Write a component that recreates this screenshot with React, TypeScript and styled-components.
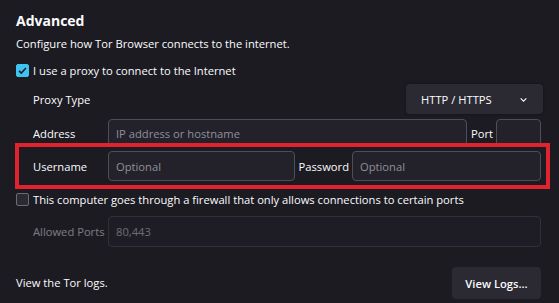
import React from "react";
import styled, { createGlobalStyle } from "styled-components";

const GlobalStyle = createGlobalStyle`
  html, body {
    margin: 0;
    padding: 0;
    background: #1c1b22;
  }
  body {
    width: 559px;
    height: 303px;
    overflow: hidden;
    font-family: "Open Sans", "Noto Sans", sans-serif;
    color: #fbfbfe;
  }
`;

const Page = styled.div`
  padding: 11px 18px 0 16px;
  width: 559px;
  box-sizing: border-box;
`;

const Heading = styled.h2`
  margin: 0;
  font-size: 14px;
  font-weight: 700;
  line-height: 20px;
`;

const Text = styled.div`
  font-size: 11.2px;
  line-height: 16px;
`;

const Description = styled(Text)`
  margin-top: 5px;
`;

const CheckRow = styled.label<{ $mt: number }>`
  display: flex;
  align-items: center;
  gap: 4px;
  margin-top: ${(p) => p.$mt}px;
  height: 16px;
  font-size: 11.2px;
`;

const Box = styled.span<{ $checked?: boolean }>`
  width: 13px;
  height: 13px;
  box-sizing: border-box;
  border-radius: 2px;
  display: flex;
  align-items: center;
  justify-content: center;
  background: ${(p) => (p.$checked ? "#3fc4f2" : "#2b2a33")};
  border: 1px solid ${(p) => (p.$checked ? "#3fc4f2" : "#6c6b75")};
`;

const Fields = styled.div<{ $mt: number; $disabled?: boolean }>`
  padding-left: 17px;
  margin-top: ${(p) => p.$mt}px;
  display: flex;
  flex-direction: column;
  opacity: ${(p) => (p.$disabled ? 0.42 : 1)};
`;

const Row = styled.div<{ $h: number; $mt?: number }>`
  position: relative;
  display: flex;
  align-items: center;
  height: ${(p) => p.$h}px;
  margin-top: ${(p) => p.$mt ?? 0}px;
  font-size: 11.2px;
`;

const Label = styled.span`
  width: 75px;
  flex: none;
`;

const InlineLabel = styled.span`
  padding: 0 3px 0 4px;
  flex: none;
`;

const Input = styled.div<{ $w?: number }>`
  box-sizing: border-box;
  height: 100%;
  flex: ${(p) => (p.$w ? "none" : "1")};
  width: ${(p) => (p.$w ? `${p.$w}px` : "auto")};
  border: 1px solid #4f4e58;
  border-radius: 4px;
  background: #23222a;
  color: #8f8f9d;
  display: flex;
  align-items: center;
  padding: 0 7px;
  font-size: 11.2px;
`;

const Value = styled.span`
  color: #d8d8de;
`;

const Spacer = styled.div`
  flex: 1;
`;

const Select = styled.div`
  width: 137px;
  height: 30px;
  box-sizing: border-box;
  background: #2b2a33;
  border-radius: 4px;
  box-shadow: 0 0 3px rgba(0, 0, 0, 0.4);
  display: flex;
  align-items: center;
  justify-content: space-between;
  padding: 0 15px 0 15px;
  font-size: 11.2px;
  margin-right: -2px;
`;

const Highlight = styled.div`
  position: absolute;
  left: -18px;
  right: -9px;
  top: -8px;
  bottom: -8px;
  border: 4px solid #e0232e;
  pointer-events: none;
`;

const Footer = styled.div`
  margin-top: 20px;
  display: flex;
  align-items: center;
  justify-content: space-between;
`;

const Button = styled.button`
  width: 89px;
  height: 32px;
  border: none;
  border-radius: 4px;
  background: #2b2a33;
  color: #fbfbfe;
  font-family: inherit;
  font-size: 11.2px;
  font-weight: 600;
  padding: 0;
`;

const Check = () => (
  <svg width="11" height="11" viewBox="0 0 16 16">
    <path d="M3 8.5l3.2 3.2L13 4.5" fill="none" stroke="#1c1b22" strokeWidth="2.2" />
  </svg>
);

const Chevron = () => (
  <svg width="9" height="9" viewBox="0 0 16 16">
    <path d="M3 6l5 5 5-5" fill="none" stroke="#fbfbfe" strokeWidth="2" />
  </svg>
);

export default function App() {
  return (
    <>
      <GlobalStyle />
      <Page>
        <Heading>Advanced</Heading>
        <Description>Configure how Tor Browser connects to the internet.</Description>
        <CheckRow $mt={10}>
          <Box $checked>
            <Check />
          </Box>
          I use a proxy to connect to the Internet
        </CheckRow>
        <Fields $mt={6}>
          <Row $h={30}>
            <Label>Proxy Type</Label>
            <Spacer />
            <Select>
              HTTP / HTTPS
              <Chevron />
            </Select>
          </Row>
          <Row $h={28} $mt={5}>
            <Label>Address</Label>
            <Input>IP address or hostname</Input>
            <InlineLabel>Port</InlineLabel>
            <Input $w={45} />
          </Row>
          <Row $h={30} $mt={4}>
            <Highlight />
            <Label>Username</Label>
            <Input>Optional</Input>
            <InlineLabel>Password</InlineLabel>
            <Input $w={189}>Optional</Input>
          </Row>
        </Fields>
        <CheckRow $mt={10}>
          <Box />
          This computer goes through a firewall that only allows connections to certain ports
        </CheckRow>
        <Fields $mt={9} $disabled>
          <Row $h={31}>
            <Label>Allowed Ports</Label>
            <Input>
              <Value>80,443</Value>
            </Input>
          </Row>
        </Fields>
        <Footer>
          <Text>View the Tor logs.</Text>
          <Button>View Logs...</Button>
        </Footer>
      </Page>
    </>
  );
}
